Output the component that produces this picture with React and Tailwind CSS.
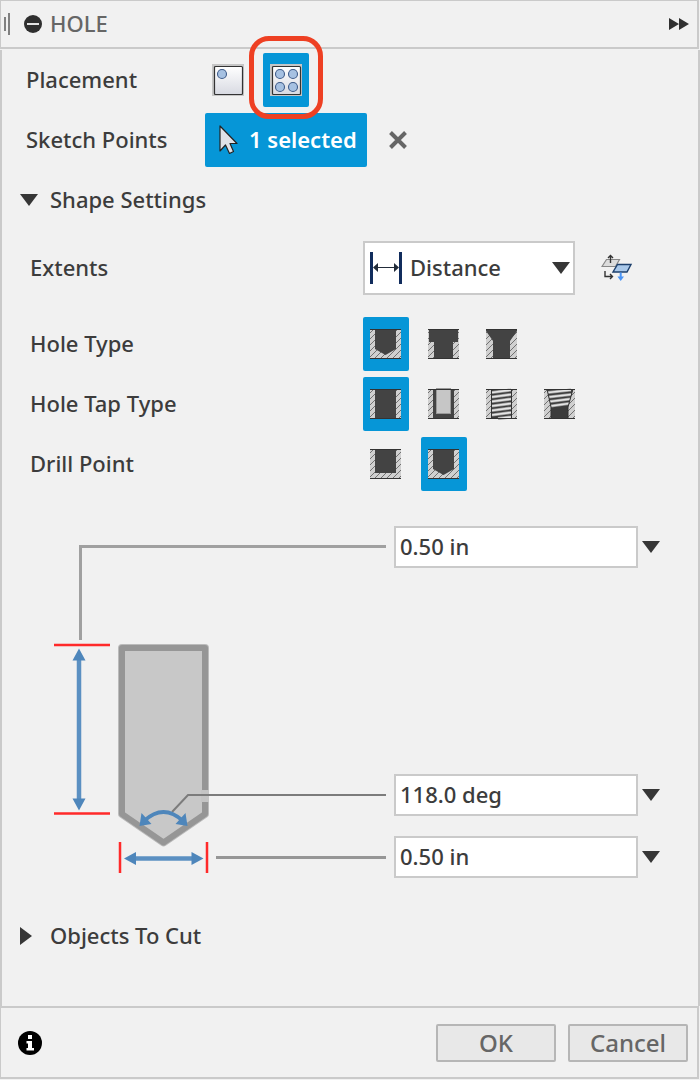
import { useState } from "react";

function TriangleDown({ className = "" }) {
  return (
    <svg viewBox="0 0 18 12" className={`h-3 w-[18px] shrink-0 ${className}`} fill="#363636" aria-hidden="true">
      <path d="M0 0h18L9 12z" />
    </svg>
  );
}

function TriangleRight() {
  return (
    <svg viewBox="0 0 12 18" className="h-[18px] w-3 shrink-0" fill="#363636" aria-hidden="true">
      <path d="M0 0v18l12-9z" />
    </svg>
  );
}

// Hatched block of material with the hole drawn on top
function HoleIcon({ children }) {
  return (
    <svg viewBox="0 0 32 32" className="size-8" aria-hidden="true">
      <svg x="0" y="1" width="31" height="30">
        <rect width="31" height="30" fill="#d0d0d0" />
        <path
          d="M-4 8L8 -4M-4 14L14 -4M-4 20L20 -4M-4 26L26 -4M-4 32L32 -4M0 34L34 0M6 34L36 4M12 34L36 10M18 34L36 16M24 34L36 22"
          stroke="#666"
          strokeWidth="0.9"
        />
      </svg>
      {children}
      <path d="M0 1.5h31M0 30.5h31" stroke="#333" />
    </svg>
  );
}

function Threads({ d }) {
  return (
    <>
      <path d={d} stroke="#999" strokeWidth="3" />
      <path d={d} stroke="#e6e6e6" strokeWidth="1.6" />
    </>
  );
}

const holeTypes = [
  { label: "Simple", art: <path d="M5 1h21v20l-10.500 6L5 21z" fill="#434343" /> },
  { label: "Counterbore", art: <path d="M1 1h29v13h-5v17H6V14H1z" fill="#434343" /> },
  { label: "Countersink", art: <path d="M0 1h31v2l-7 10v18H7V13L0 3z" fill="#434343" /> },
];

const tapTypes = [
  { label: "Plain", art: <path d="M5 1h21v30H5z" fill="#434343" /> },
  {
    label: "Clearance",
    art: (
      <>
        <path d="M5 1h21v30H5z" fill="#434343" />
        <rect x="8.500" y="0.500" width="14" height="25" fill="#c6c6c6" stroke="#999" />
      </>
    ),
  },
  {
    label: "Tapped",
    art: (
      <>
        <path d="M5 1h21v30H5z" fill="#3c3c3c" />
        <Threads d="M6 4.500l19-2.500M6 9l19-2.500M6 13.500l19-2.500M6 18l19-2.500M6 22.500l19-2.500M6 27l19-2.500M12 30.500l13-1.500" />
        <path d="M5.500 1v30M25.500 1v30" stroke="#333" />
      </>
    ),
  },
  {
    label: "Taper tapped",
    art: (
      <>
        <path d="M3 1h26l-5 18v12H7V19z" fill="#3c3c3c" />
        <Threads d="M4 4.500l23-2.500M5 9l22-2.500M6 13.500l20-2.500M7 18l18-2.500" />
        <path d="M3 1l4 18v12M29 1l-5 18v12" stroke="#333" fill="none" />
      </>
    ),
  },
];

const drillPoints = [
  { label: "Flat", art: <path d="M5 1h21v24H5z" fill="#434343" /> },
  { label: "Angle", art: <path d="M5 1h21v20l-10.500 6L5 21z" fill="#434343" /> },
];

function IconButton({ label, selected, onClick, children }) {
  return (
    <button
      type="button"
      aria-label={label}
      aria-pressed={selected}
      onClick={onClick}
      className={`flex h-[54px] w-[46px] items-center justify-center rounded-xs ${selected ? "bg-[#0696d7]" : ""}`}
    >
      {children}
    </button>
  );
}

function OptionRow({ label, options, initial }) {
  const [selected, setSelected] = useState(initial);
  return (
    <div role="group" aria-label={label} className="flex h-[60px] items-center pl-7">
      <span className="w-[333px] shrink-0 pb-0.5">{label}</span>
      <div className="flex gap-3">
        {options.map((option, i) => (
          <IconButton key={option.label} label={option.label} selected={i === selected} onClick={() => setSelected(i)}>
            <HoleIcon>{option.art}</HoleIcon>
          </IconButton>
        ))}
      </div>
    </div>
  );
}

function PlateIcon({ points }) {
  return (
    <svg viewBox="0 0 32 32" className="size-8" aria-hidden="true">
      <defs>
        <linearGradient id="plate" x1="0" y1="0" x2="0" y2="1">
          <stop offset="0" stopColor="#fff" />
          <stop offset="1" stopColor="#d8dae2" />
        </linearGradient>
      </defs>
      <rect width="32" height="32" fill="#c6c6c6" />
      <rect x="2.500" y="2.500" width="28" height="28" rx="1" fill="url(#plate)" stroke="#333" strokeWidth="1.200" />
      {points.map(([x, y]) => (
        <circle key={`${x}-${y}`} cx={x} cy={y} r="4.500" fill="#a6c1e2" stroke="#3f5c8a" strokeWidth="1.100" />
      ))}
    </svg>
  );
}

function ValueField({ label, initial }) {
  const [value, setValue] = useState(initial);
  return (
    <div className="flex items-center gap-1">
      <input
        aria-label={label}
        value={value}
        onChange={(e) => setValue(e.target.value)}
        className="h-[42px] min-w-0 flex-1 border-2 border-[#cacaca] bg-white px-1 pb-0.5 outline-none"
      />
      <button type="button" aria-label={`${label} options`}>
        <TriangleDown />
      </button>
    </div>
  );
}

function HoleDiagram() {
  return (
    <svg viewBox="0 0 346 352" className="h-[352px] w-[346px] shrink-0" fill="none" aria-hidden="true">
      <path d="M40.500 114V20.500H346" stroke="#a0a0a0" strokeWidth="3" />
      <path d="M82 122h83v166l-41.500 28.500L82 288z" fill="#c8c8c8" stroke="#bbb" strokeWidth="8" strokeLinejoin="round" />
      <path d="M82 122h83v166l-41.500 28.500L82 288z" fill="#c8c8c8" stroke="#969696" strokeWidth="6" strokeLinejoin="round" />
      <path d="M165 264v12" stroke="#c4c4c4" strokeWidth="8" />
      <path d="M132 286l16-17h198" stroke="#7c7c7c" strokeWidth="2" />
      <path d="M104 295Q123.500 277 143 295" stroke="#4e86bb" strokeWidth="4" />
      <path d="M99.500 300l2-13 10 11zM147.500 300l-2-13-10 11z" fill="#4e86bb" />
      <path d="M14 119h56M14 287.500h56M80 316v31M167 316v31" stroke="#ff2a2a" strokeWidth="2.500" />
      <path d="M39 130v146" stroke="#5b90c2" strokeWidth="4.500" />
      <path d="M39 122.500l6.500 12h-13zM39 284.500l6.500-12h-13z" fill="#4e86bb" />
      <path d="M90 332.500h68" stroke="#5b90c2" strokeWidth="4.500" />
      <path d="M84 332.500l12-6.500v13zM163.500 332.500l-12-6.500v13z" fill="#4e86bb" />
      <path d="M176 331.500h170" stroke="#969696" strokeWidth="3" />
    </svg>
  );
}

function Highlight() {
  return (
    <span className="pointer-events-none absolute -inset-x-3.5 -top-[17px] -bottom-3 z-10 rounded-[20px] border-5 border-[#ee4023]" />
  );
}

export default function App() {
  const [multiple, setMultiple] = useState(true);
  const [hasSelection, setHasSelection] = useState(true);
  const [shapeOpen, setShapeOpen] = useState(true);
  const [cutOpen, setCutOpen] = useState(false);

  return (
    <div className="flex min-h-screen flex-col bg-[#f1f1f1] pb-px font-['Noto_Sans',sans-serif] text-[22px] leading-7 font-medium text-[#3c3c3c]">
      <header className="mr-px mb-px flex h-[49px] items-center border-t border-r-2 border-b-2 border-l border-[#cacaca] pr-2 pl-[3px] text-[#666]">
        <svg viewBox="0 0 6 22" className="h-[22px] w-1.5" aria-hidden="true">
          <path d="M1 4v14M5 0v22" stroke="#808080" strokeWidth="2" />
        </svg>
        <button type="button" aria-label="Collapse panel" className="mr-2 ml-3.5">
          <svg viewBox="0 0 18 18" className="size-[18px]" aria-hidden="true">
            <circle cx="9" cy="9" r="9" fill="#2f2f2f" />
            <path d="M3 9h12" stroke="#e4e4e4" strokeWidth="2" />
          </svg>
        </button>
        <h1 className="pb-0.5">HOLE</h1>
        <button type="button" aria-label="Expand" className="ml-auto">
          <svg viewBox="0 0 20 12" className="h-3 w-5" fill="#303030" aria-hidden="true">
            <path d="M0 0l10 6-10 6zM10 0l10 6-10 6z" />
          </svg>
        </button>
      </header>

      <main className="flex-1 border-x-2 border-[#cacaca]">
        <div role="group" aria-label="Placement" className="flex h-[60px] items-center pl-6">
          <span className="w-[179px] shrink-0 pb-0.5">Placement</span>
          <div className="flex gap-3">
            <IconButton label="Single hole" selected={!multiple} onClick={() => setMultiple(false)}>
              <PlateIcon points={[[10, 10]]} />
            </IconButton>
            <div className="relative">
              <IconButton label="Multiple holes" selected={multiple} onClick={() => setMultiple(true)}>
                <PlateIcon points={[[10, 10], [23, 10], [10, 23], [23, 23]]} />
              </IconButton>
              <Highlight />
            </div>
          </div>
        </div>

        <div className="flex h-[60px] items-center pl-6">
          <span className="w-[179px] shrink-0 pb-0.5">Sketch Points</span>
          <button
            type="button"
            onClick={() => setHasSelection(true)}
            className="flex h-[54px] items-center gap-2.5 rounded-xs bg-[#0696d7] pr-2.5 pl-3.5 font-semibold text-white"
          >
            <svg viewBox="0 0 20 30" className="h-[30px] w-5" aria-hidden="true">
              <path
                d="M1 1v25l5.500-6 4 8.500 4-2-3.500-8h7z"
                fill="#dfe1e7"
                stroke="#222"
                strokeWidth="1.200"
                strokeLinejoin="round"
              />
            </svg>
            <span className="pb-0.5">{hasSelection ? "1 selected" : "Select"}</span>
          </button>
          <button type="button" aria-label="Clear selection" onClick={() => setHasSelection(false)} className="ml-[22px]">
            <svg viewBox="0 0 18 18" className="size-[18px]" aria-hidden="true">
              <path d="M1.500 1.500l15 15M16.500 1.500l-15 15" stroke="#666" strokeWidth="4" />
            </svg>
          </button>
        </div>

        <h2>
          <button
            type="button"
            aria-expanded={shapeOpen}
            onClick={() => setShapeOpen(!shapeOpen)}
            className="flex h-[60px] items-center pl-[18px]"
          >
            <span className="w-[30px]">{shapeOpen ? <TriangleDown /> : <TriangleRight />}</span>
            <span className="pb-0.5">Shape Settings</span>
          </button>
        </h2>

        {shapeOpen && (
          <>
            <div className="mb-2 flex h-[76px] items-center pl-7">
              <label htmlFor="extents" className="w-[333px] shrink-0 pb-0.5">
                Extents
              </label>
              <div className="relative">
                <select
                  id="extents"
                  className="h-[54px] w-[212px] appearance-none border-2 border-[#cacaca] bg-white pb-0.5 pl-[45px] outline-none"
                >
                  <option>Distance</option>
                  <option>To</option>
                  <option>All</option>
                </select>
                <svg viewBox="0 0 32 32" className="pointer-events-none absolute top-[11px] left-[7px] size-8" aria-hidden="true">
                  <path d="M1.500 0v32M30.500 0v32" stroke="#112c5c" strokeWidth="3" />
                  <path d="M5 15.500h22" stroke="#222c3a" />
                  <path d="M3 15.500l5-4.500v9zM29 15.500l-5-4.500v9z" fill="#222c3a" />
                </svg>
                <TriangleDown className="pointer-events-none absolute top-[21px] right-[5px]" />
              </div>
              <button type="button" aria-label="Flip direction" className="ml-[26px]">
                <svg viewBox="0 0 32 28" className="h-7 w-8" fill="none" aria-hidden="true">
                  <path d="M5.500 5.500h13l-4 7H1z" fill="#dcdcdc" stroke="#888" strokeWidth="1.200" />
                  <path d="M9.500 9V1.500M7 4l2.500-2.500L12 4" stroke="#333" strokeWidth="1.400" />
                  <path d="M16.500 10.500h13.500l-4 7.500H12z" fill="#a9c8ea" stroke="#1c3f6c" strokeWidth="1.400" />
                  <path d="M4 17v5.500h7M9 20l2.500 2.500L9 25" stroke="#333" strokeWidth="1.400" />
                  <path d="M18.700 18.500h2v4h2.300l-3.300 4.500-3.300-4.500h2.300z" fill="#4a94f5" />
                </svg>
              </button>
            </div>

            <OptionRow label="Hole Type" options={holeTypes} initial={0} />
            <OptionRow label="Hole Tap Type" options={tapTypes} initial={0} />
            <OptionRow label="Drill Point" options={drillPoints} initial={1} />

            <div className="mt-8 mb-7 flex gap-2 px-[38px]">
              <HoleDiagram />
              <div className="flex min-w-0 flex-1 flex-col justify-between">
                <ValueField label="Depth" initial="0.50 in" />
                <div className="flex flex-col gap-5">
                  <ValueField label="Tip angle" initial="118.0 deg" />
                  <ValueField label="Diameter" initial="0.50 in" />
                </div>
              </div>
            </div>
          </>
        )}

        <h2>
          <button
            type="button"
            aria-expanded={cutOpen}
            onClick={() => setCutOpen(!cutOpen)}
            className="flex h-[60px] items-center pl-[18px]"
          >
            <span className="w-[30px]">{cutOpen ? <TriangleDown /> : <TriangleRight />}</span>
            <span className="pb-0.5">Objects To Cut</span>
          </button>
        </h2>
      </main>

      <footer className="mr-px flex h-[73px] items-center gap-3 border-t-2 border-r-2 border-b-2 border-l border-[#cacaca] pr-[9px] pl-[17px] text-2xl text-[#666]">
        <button type="button" aria-label="Information" className="mr-auto">
          <svg viewBox="0 0 24 24" className="size-6" aria-hidden="true">
            <circle cx="12" cy="12" r="12" fill="#000" />
            <path d="M10 4h4v4h-4zM8.500 10h5.500v7h2v2.500H8.500V17H10v-4.500H8.500z" fill="#fff" />
          </svg>
        </button>
        <button type="button" className="h-[38px] w-[120px] rounded-xs border-2 border-[#b6b6b6] bg-[#e8e8e8] leading-8">
          OK
        </button>
        <button type="button" className="h-[38px] w-[120px] rounded-xs border-2 border-[#b6b6b6] bg-[#e8e8e8] leading-8">
          Cancel
        </button>
      </footer>
    </div>
  );
}
